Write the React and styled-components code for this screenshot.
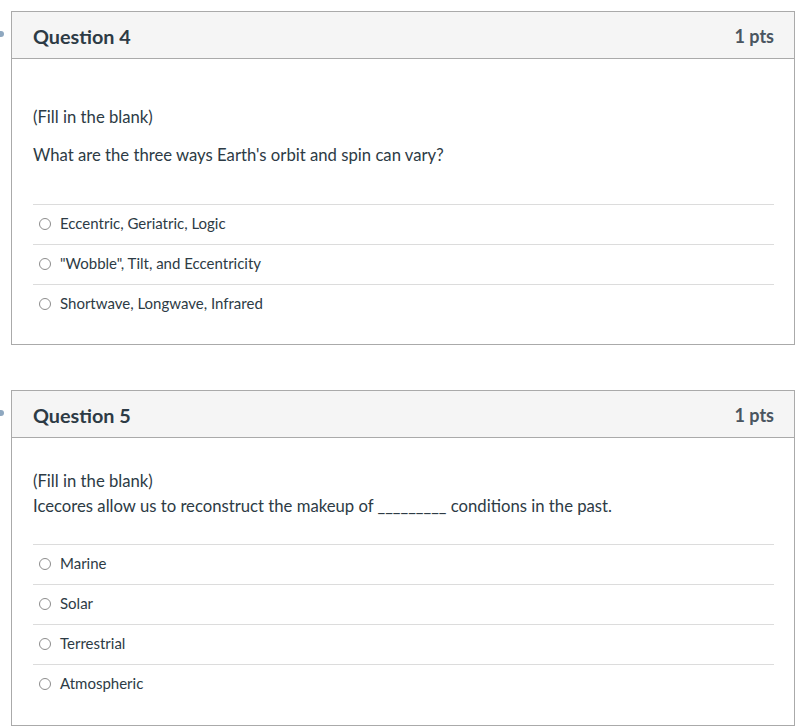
import React from "react";
import styled, { createGlobalStyle } from "styled-components";

const Global = createGlobalStyle`
  html, body { margin: 0; padding: 0; background: #fff; }
  body { font-family: Lato, "Open Sans", "Liberation Sans", sans-serif; color: #2d3b45; }
  * { box-sizing: border-box; }
`;

const Page = styled.div`
  padding: 11px 0 0 11px;
  display: flex;
  flex-direction: column;
  gap: 45px;
`;

const Card = styled.section`
  position: relative;
  width: 784px;
  border: 1px solid #aaaaaa;
  background: #fff;
`;

const Marker = styled.span`
  position: absolute;
  left: -12px;
  top: 19px;
  width: 4px;
  height: 6px;
  border-radius: 0 3px 3px 0;
  background: #8fa8c0;
`;

const Header = styled.header`
  height: 47px;
  background: #f5f5f5;
  border-bottom: 1px solid #aaaaaa;
  display: flex;
  align-items: center;
  justify-content: space-between;
  padding: 2px 20px 0 21px;
`;

const Title = styled.h2`
  margin: 0;
  font-size: 19.8px;
  font-weight: 700;
  color: #2d3b45;
`;

const Points = styled.span`
  font-size: 18px;
  font-weight: 700;
  color: #4a5560;
`;

const Body = styled.div`
  padding: ${(p) => p.$top}px 20px ${(p) => p.$bottom}px 21px;
`;

const Para = styled.p`
  margin: ${(p) => p.$mt || 0}px 0 0 0;
  font-size: 16.7px;
  line-height: 24px;
`;

const Answers = styled.ul`
  list-style: none;
  margin: ${(p) => p.$mt}px 0 0 0;
  padding: 0;
`;

const Answer = styled.li`
  height: 40px;
  border-top: 1px solid #dcdcdc;
  display: flex;
  align-items: center;
  gap: 9px;
  padding: 0 0 4px 6px;
  font-size: 15px;
`;

const Radio = styled.span`
  width: 12px;
  height: 12px;
  margin-top: 2px;
  border-radius: 50%;
  border: 1px solid #8c8c8c;
  background: #fff;
  flex: none;
`;

const questions = [
  {
    title: "Question 4",
    top: 31,
    bottom: 20,
    answersTop: 37,
    text: [
      { t: "(Fill in the blank)", mt: 15 },
      { t: "What are the three ways Earth's orbit and spin can vary?", mt: 14 },
    ],
    answers: [
      "Eccentric, Geriatric, Logic",
      '"Wobble", Tilt, and Eccentricity',
      "Shortwave, Longwave, Infrared",
    ],
  },
  {
    title: "Question 5",
    top: 31,
    bottom: 21,
    answersTop: 26,
    text: [
      { t: "(Fill in the blank)", mt: 0 },
      {
        t: "Icecores allow us to reconstruct the makeup of _________ conditions in the past.",
        mt: 1,
      },
    ],
    answers: ["Marine", "Solar", "Terrestrial", "Atmospheric"],
  },
];

export default function App() {
  return (
    <>
      <Global />
      <Page>
        {questions.map((q) => (
          <Card key={q.title}>
            <Marker />
            <Header>
              <Title>{q.title}</Title>
              <Points>1 pts</Points>
            </Header>
            <Body $top={q.top} $bottom={q.bottom}>
              {q.text.map((p, i) => (
                <Para key={i} $mt={p.mt}>
                  {p.t}
                </Para>
              ))}
              <Answers $mt={q.answersTop}>
                {q.answers.map((a) => (
                  <Answer key={a}>
                    <Radio />
                    <span>{a}</span>
                  </Answer>
                ))}
              </Answers>
            </Body>
          </Card>
        ))}
      </Page>
    </>
  );
}
